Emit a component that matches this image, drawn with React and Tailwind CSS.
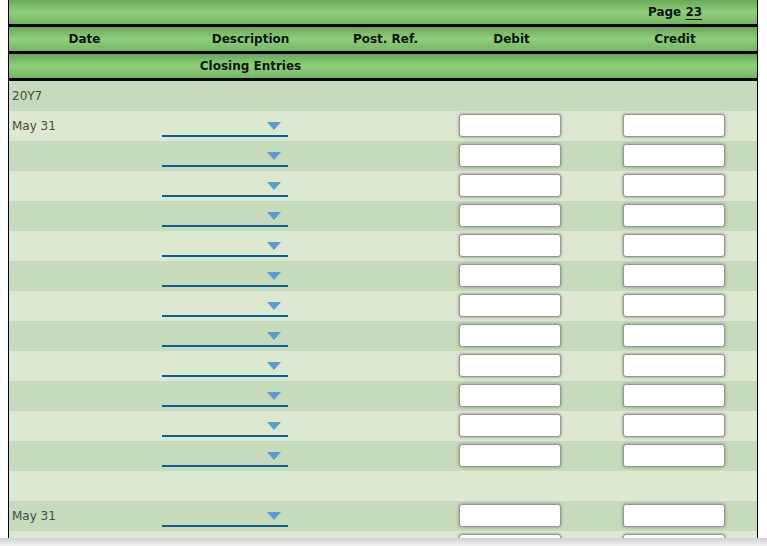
const font = "font-['DejaVu_Sans','Verdana',sans-serif]";

function HeaderBand({ children }) {
  return (
    <div className="grid grid-cols-[150px_182px_88px_164px_164px] h-[27px] pb-[1px] border-b-[3px] border-black bg-[linear-gradient(180deg,#6aa85a_0%,#90cf7c_50%,#74b564_100%)] bg-clip-padding text-[12px] font-bold text-[#0a140a] items-center text-center">
      {children}
    </div>
  );
}

function Select() {
  return (
    <div className="relative ml-[3px] w-[126px] h-[26px] border-b-2 border-[#0b5f9b]">
      <svg className="absolute left-[105px] top-[11px]" width="14" height="8" viewBox="0 0 14 8">
        <path d="M0 0H14L7 8Z" fill="#5c9bd1" />
      </svg>
    </div>
  );
}

function Input() {
  return (
    <div className="w-[102px] h-[23px] mt-[3px] bg-white rounded-[3px] border border-[#969696] shadow-[0_0_3px_#7f7f7f]" />
  );
}

function Row({ date, dark, empty }) {
  return (
    <div className={`grid grid-cols-[150px_182px_88px_164px_164px] h-[30px] text-[12px] text-[#4a4a40] ${dark ? "bg-[#c5dbbb]" : "bg-[#dde8d1]"}`}>
      <div className="pl-[3px] leading-[30px]">{date}</div>
      <div>{!empty && <Select />}</div>
      <div />
      <div className="flex justify-center pr-[2px]">{!empty && <Input />}</div>
      <div className="flex justify-center pr-[2px]">{!empty && <Input />}</div>
    </div>
  );
}

export default function App() {
  const rows = [
    { date: "20Y7", dark: true, empty: true },
    { date: "May 31" },
    ...Array.from({ length: 11 }, (_, i) => ({ dark: i % 2 === 0 })),
    { empty: true },
    { date: "May 31", dark: true },
    {},
  ];
  return (
    <div className={`relative h-[546px] overflow-hidden bg-white ${font}`}>
      <div className="mx-[8px] border-x border-black w-[750px]">
        <HeaderBand>
          <div /><div /><div /><div />
          <div>Page <span className="underline underline-offset-[3px]">23</span></div>
        </HeaderBand>
        <HeaderBand>
          <div className="pl-[1px]">Date</div>
          <div className="pl-[1px]">Description</div>
          <div className="pl-[1px]">Post. Ref.</div>
          <div className="pl-[1px]">Debit</div>
          <div>Credit</div>
        </HeaderBand>
        <HeaderBand>
          <div />
          <div className="pl-[1px]">Closing Entries</div>
          <div /><div /><div />
        </HeaderBand>
        {rows.map((r, i) => <Row key={i} {...r} />)}
      </div>
      <div className="absolute bottom-0 left-0 right-0 h-[8px] bg-[linear-gradient(180deg,#d0d0d0,#f0f0f0)]" />
    </div>
  );
}
